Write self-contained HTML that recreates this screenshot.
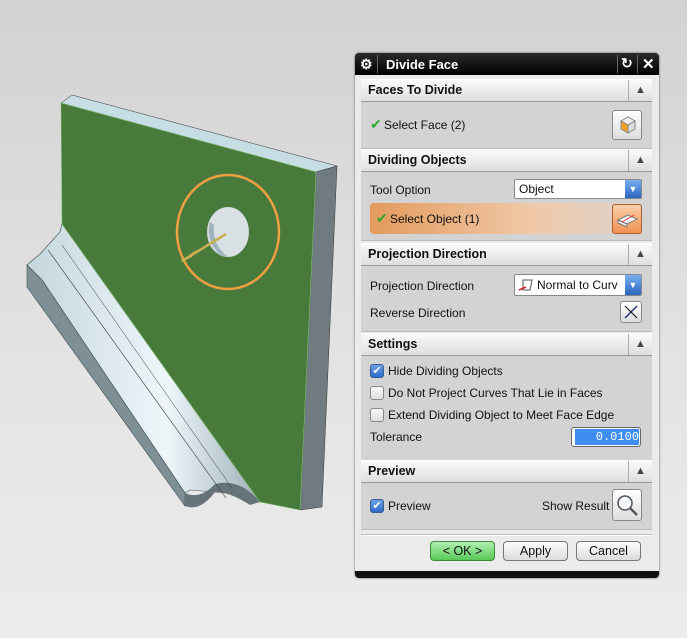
<!DOCTYPE html>
<html><head><style>
body{margin:0;width:687px;height:638px;overflow:hidden;background:linear-gradient(180deg,#d2d2d2 0%,#e4e4e4 60%,#ececec 100%);font-family:"Liberation Sans",sans-serif;font-size:12px;color:#111;position:relative}
.a{position:absolute}
#dlg{left:355px;top:53px;width:304px;height:525px;background:#ebebeb;border-radius:4px;box-shadow:0 0 2px #555}
#title{left:0;top:0;width:304px;height:22px;background:linear-gradient(#2a2a2a,#000);border-radius:4px 4px 0 0;color:#fff;font-weight:bold;font-size:13px}
.hd{left:6px;width:291px;height:21px;background:linear-gradient(#fafafa,#dedede);border-top:1px solid #fff;border-bottom:1px solid #9a9a9a;font-weight:bold;font-size:12.5px;line-height:21px;text-indent:7px}
.hd i{position:absolute;right:0;top:0;width:23px;height:21px;border-left:1px solid #aaa;font-style:normal;text-indent:0;text-align:center;font-size:11px;color:#444}
.ct{left:6px;width:291px;background:#d3d3d3;border-bottom:1px solid #bbb}
.t{position:absolute;white-space:nowrap}
.cb{position:absolute;width:12px;height:12px;border:1px solid #888;border-radius:3px;background:linear-gradient(#fafafa,#ddd)}
.cb.on{background:linear-gradient(#6aa0e8,#2c6bc8);border-color:#3c5f92;color:#fff;font-size:11px;line-height:12px;text-align:center}
.ck{color:#2eaa2e;font-size:14px}
.btn{position:absolute;height:18px;border:1px solid #777;border-radius:4px;background:linear-gradient(#fdfdfd,#dcdcdc);text-align:center;line-height:18px;font-size:12.5px}
.ib{position:absolute;border:1px solid #888;border-radius:3px;background:linear-gradient(#fff,#ddd)}
</style></head><body>
<svg class="a" style="left:0;top:0" width="350" height="560">
 <defs>
  <linearGradient id="rib" x1="0" y1="0" x2="1" y2="0"><stop offset="0" stop-color="#c5d6dd"/><stop offset=".6" stop-color="#eef6f9"/><stop offset="1" stop-color="#9fb1b9"/></linearGradient>
 </defs>
 <polygon points="27,265 40,254 60,232 62,224 260,502 240,494 190,490 185,493 42,280" fill="url(#rib)" stroke="#3a4a50" stroke-width=".6"/>
 <polygon points="27,265 42,280 185,493 185,506 27,287" fill="#7f8f96" stroke="#3a4a50" stroke-width=".6"/>
 <path d="M185,493 Q200,500 215,484 Q240,478 260,502 L250,505 Q230,492 215,492 Q200,512 185,506Z" fill="#667479"/>
 <line x1="48" y1="250" x2="226" y2="498" stroke="#333" stroke-width=".6"/>
 <line x1="62" y1="245" x2="232" y2="488" stroke="#333" stroke-width=".5"/>
 <polygon points="61,103 72,95 337,166 316,172" fill="#c7dde4" stroke="#333" stroke-width=".5"/>
 <polygon points="316,172 337,166 322,507 300,510" fill="#6f7b80" stroke="#333" stroke-width=".5"/>
 <polygon points="61,103 316,172 300,510 260,502 62,224" fill="#487a3c" stroke="#7ac06a" stroke-width=".6"/>
 <ellipse cx="228" cy="232" rx="51" ry="57" fill="none" stroke="#f0a040" stroke-width="2.5"/>
 <ellipse cx="228" cy="232" rx="21" ry="25" fill="#d8e0e4"/>
 <path d="M210,222 Q205,240 220,255 L228,257 Q212,245 214,225Z" fill="#9fb4bc"/>
 <line x1="182" y1="261" x2="226" y2="234" stroke="#c8b050" stroke-width="2.5"/>
 <polygon points="180,262 196,250 192,257" fill="#c8b050"/>
</svg>
<div id="dlg" class="a">
 <div id="title" class="a">
  <span class="t" style="left:5px;top:3px;font-size:14px">⚙</span>
  <div class="a" style="left:22px;top:2px;width:1px;height:18px;background:#666"></div>
  <span class="t" style="left:31px;top:4px">Divide Face</span>
  <div class="a" style="left:262px;top:2px;width:1px;height:18px;background:#666"></div>
  <span class="t" style="left:266px;top:2px;font-size:14px">↻</span>
  <div class="a" style="left:282px;top:2px;width:1px;height:18px;background:#666"></div>
  <span class="t" style="left:287px;top:2px;font-size:15px">✕</span>
 </div>
 <div class="a hd" style="top:26px">Faces To Divide<i>▲</i></div>
 <div class="a ct" style="top:49px;height:46px">
  <span class="t ck" style="left:9px;top:14px">✔</span><span class="t" style="left:23px;top:16px">Select Face (2)</span>
  <div class="ib" style="left:251px;top:8px;width:28px;height:28px"><svg width="28" height="28"><polygon points="8,10 15,6 22,10 15,14" fill="#eee" stroke="#888"/><polygon points="8,10 15,14 15,22 8,18" fill="#f5a020" stroke="#888"/><polygon points="15,14 22,10 22,18 15,22" fill="#ddd" stroke="#888"/></svg></div>
 </div>
 <div class="a hd" style="top:96px">Dividing Objects<i>▲</i></div>
 <div class="a ct" style="top:119px;height:68px">
  <span class="t" style="left:9px;top:11px">Tool Option</span>
  <div class="a" style="left:153px;top:7px;width:126px;height:18px;background:#fff;border:1px solid #888;border-radius:2px"><span class="t" style="left:4px;top:2px">Object</span><div class="a" style="right:0;top:0;width:16px;height:18px;background:linear-gradient(#7ab0f0,#2a66c0);color:#fff;font-size:9px;text-align:center;line-height:18px">▼</div></div>
  <div class="a" style="left:9px;top:31px;width:270px;height:31px;border-radius:4px;background:linear-gradient(90deg,#e39a5c,#f0c9a8 60%,#dcd2cc)"></div>
  <span class="t ck" style="left:15px;top:38px">✔</span><span class="t" style="left:29px;top:40px">Select Object (1)</span>
  <div class="ib" style="left:251px;top:32px;width:28px;height:28px;background:linear-gradient(#fbd0a8,#f09050);border-color:#b06030"><svg width="28" height="28"><polygon points="5,15 15,10 24,14 14,19" fill="#fff" stroke="#777"/><polygon points="5,15 14,19 14,22 5,18" fill="#eee" stroke="#777"/><line x1="9" y1="17" x2="21" y2="10" stroke="#d33"/></svg></div>
 </div>
 <div class="a hd" style="top:190px">Projection Direction<i>▲</i></div>
 <div class="a ct" style="top:213px;height:65px">
  <span class="t" style="left:9px;top:13px">Projection Direction</span>
  <div class="a" style="left:153px;top:8px;width:126px;height:20px;background:#fff;border:1px solid #888;border-radius:2px;overflow:hidden"><svg class="a" style="left:3px;top:3px" width="16" height="14"><path d="M5,2 L14,2 L12,12 L5,12Z" fill="none" stroke="#555"/><path d="M1,12 L8,9" stroke="#c22" stroke-width="1.5"/></svg><span class="t" style="left:22px;top:3px">Normal to Curv</span><div class="a" style="right:0;top:0;width:16px;height:20px;background:linear-gradient(#7ab0f0,#2a66c0);color:#fff;font-size:9px;text-align:center;line-height:20px">▼</div></div>
  <span class="t" style="left:9px;top:40px">Reverse Direction</span>
  <div class="ib" style="left:259px;top:35px;width:20px;height:20px"><svg width="20" height="20"><line x1="4" y1="16" x2="16" y2="4" stroke="#237" stroke-width="1.5"/><line x1="4" y1="4" x2="16" y2="16" stroke="#111"/></svg></div>
 </div>
 <div class="a hd" style="top:280px">Settings<i>▲</i></div>
 <div class="a ct" style="top:303px;height:104px">
  <div class="cb on" style="left:9px;top:8px">✔</div><span class="t" style="left:27px;top:8px">Hide Dividing Objects</span>
  <div class="cb" style="left:9px;top:30px"></div><span class="t" style="left:27px;top:30px">Do Not Project Curves That Lie in Faces</span>
  <div class="cb" style="left:9px;top:52px"></div><span class="t" style="left:27px;top:52px">Extend Dividing Object to Meet Face Edge</span>
  <span class="t" style="left:9px;top:74px">Tolerance</span>
  <div class="a" style="left:210px;top:71px;width:68px;height:18px;border:1px solid #666;border-radius:3px;background:#fff"><div class="a" style="left:3px;top:1px;width:64px;height:16px;background:#3d8ef0;color:#fff;font-family:'Liberation Mono',monospace;text-align:right;line-height:16px">0.0100</div></div>
 </div>
 <div class="a hd" style="top:407px">Preview<i>▲</i></div>
 <div class="a ct" style="top:430px;height:46px">
  <div class="cb on" style="left:9px;top:16px">✔</div><span class="t" style="left:27px;top:16px">Preview</span>
  <span class="t" style="left:181px;top:16px">Show Result</span>
  <div class="ib" style="left:251px;top:6px;width:28px;height:30px"><svg width="28" height="30"><circle cx="12" cy="13" r="7" fill="#f4f8fc" stroke="#555" stroke-width="1.5"/><line x1="17" y1="18" x2="24" y2="25" stroke="#555" stroke-width="2.5"/></svg></div>
 </div>
 <div class="a" style="left:6px;top:481px;width:291px;height:1px;background:#bbb;border-bottom:1px solid #fff"></div>
 <div class="btn" style="left:75px;top:488px;width:63px;background:linear-gradient(#b0f0b0,#58c858);border-color:#3a8a3a">&lt; OK &gt;</div>
 <div class="btn" style="left:148px;top:488px;width:63px">Apply</div>
 <div class="btn" style="left:221px;top:488px;width:63px">Cancel</div>
 <div class="a" style="left:0;top:518px;width:304px;height:7px;background:#111;border-radius:0 0 4px 4px"></div>
</div>
</body></html>
